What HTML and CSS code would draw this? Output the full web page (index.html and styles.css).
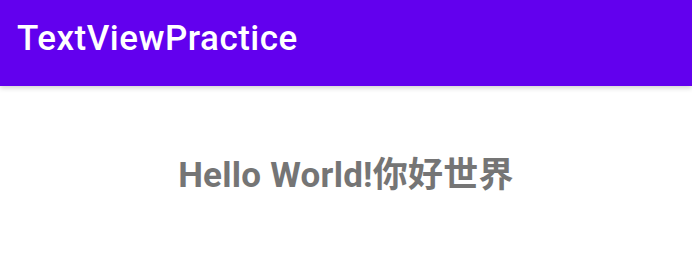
FILE: index.html
```html
<!DOCTYPE html>
<html>
<head>
<meta charset="utf-8">
<link rel="stylesheet" href="styles.css">
</head>
<body>
<header class="appbar"><h1 class="title">TextViewPractice</h1></header>
<main class="content"><p class="hello">Hello World!你好世界</p></main>
</body>
</html>
```
FILE: styles.css
```css
html, body { margin: 0; padding: 0; background: #fff; }
body { width: 692px; height: 254px; overflow: hidden; font-family: Roboto, "Noto Sans CJK SC", sans-serif; }
.appbar {
  height: 86px;
  box-sizing: border-box;
  background: #6200ee;
  display: flex;
  align-items: center;
  padding: 0 0 10px 17px;
  box-shadow: 0 2px 5px rgba(0,0,0,0.18);
  position: relative;
}
.title {
  margin: 0;
  color: #fff;
  font-size: 35px;
  line-height: 41px;
  font-weight: 500;
  letter-spacing: 0.5px;
}
.content {
  display: flex;
  justify-content: center;
  padding-top: 69px;
}
.hello {
  margin: 0;
  color: #757575;
  font-size: 35px;
  line-height: 41px;
  font-weight: 700;
  letter-spacing: 0.25px;
}
```
